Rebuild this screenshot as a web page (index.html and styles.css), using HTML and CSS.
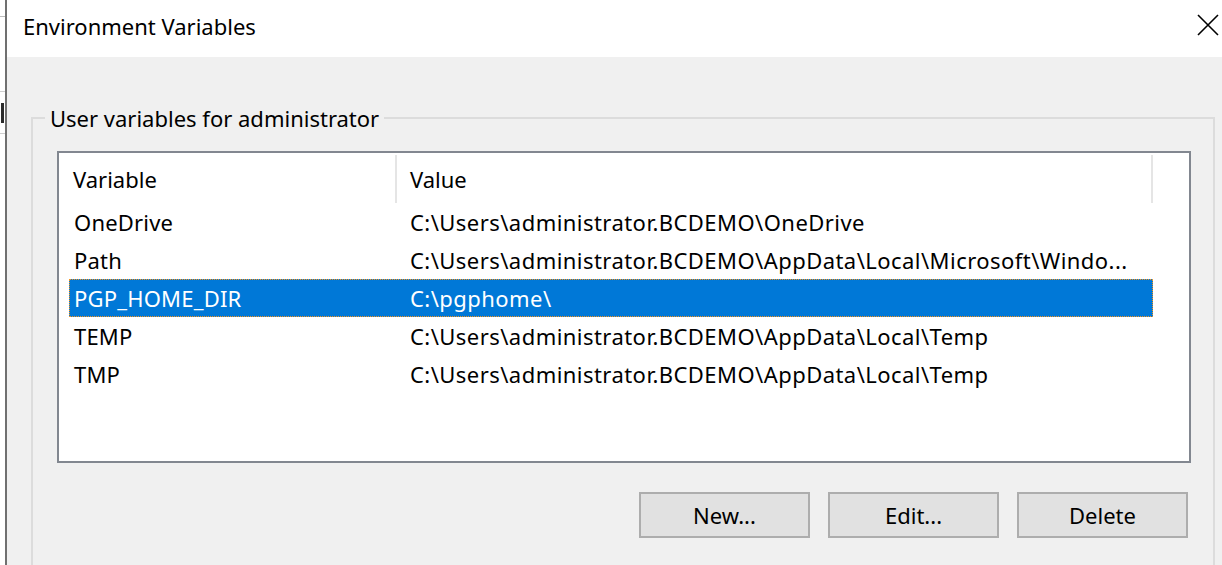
FILE: index.html
```html
<!DOCTYPE html>
<html lang="en">
<head>
<meta charset="utf-8">
<title>Environment Variables</title>
<link rel="stylesheet" href="styles.css">
</head>
<body>
<div class="screen">
  <div class="behind">
    <div class="behind-row r1"></div>
    <div class="behind-row r2"></div>
    <div class="behind-row r3"><span class="glyph-stub"></span></div>
  </div>
  <div class="dialog">
    <div class="titlebar">
      <div class="title">Environment Variables</div>
      <svg class="close" width="22" height="22" viewBox="0 0 22 22" aria-hidden="true">
        <path d="M1 1 L21 21 M21 1 L1 21" stroke="#000" stroke-width="1.6" fill="none"/>
      </svg>
    </div>
    <div class="client">
      <fieldset class="group">
        <legend>User variables for administrator</legend>
        <div class="listview">
          <div class="lv-header">
            <div class="hcell c1">Variable</div>
            <div class="hsep"></div>
            <div class="hcell c2">Value</div>
            <div class="hsep"></div>
          </div>
          <div class="lv-row"><div class="cell c1">OneDrive</div><div class="cell c2">C:\Users\administrator.BCDEMO\OneDrive</div></div>
          <div class="lv-row"><div class="cell c1">Path</div><div class="cell c2">C:\Users\administrator.BCDEMO\AppData\Local\Microsoft\Windo...</div></div>
          <div class="lv-row selected"><div class="cell c1">PGP_HOME_DIR</div><div class="cell c2">C:\pgphome\</div></div>
          <div class="lv-row"><div class="cell c1">TEMP</div><div class="cell c2">C:\Users\administrator.BCDEMO\AppData\Local\Temp</div></div>
          <div class="lv-row"><div class="cell c1">TMP</div><div class="cell c2">C:\Users\administrator.BCDEMO\AppData\Local\Temp</div></div>
        </div>
        <div class="buttons">
          <button class="btn">New...</button>
          <button class="btn">Edit...</button>
          <button class="btn">Delete</button>
        </div>
      </fieldset>
    </div>
  </div>
</div>
</body>
</html>
```
FILE: styles.css
```css
html, body {
  margin: 0;
  padding: 0;
}
body {
  width: 1222px;
  height: 565px;
  overflow: hidden;
  background: #fff;
  color: #000;
  font-family: "Noto Sans", "Open Sans", "DejaVu Sans", sans-serif;
  font-size: 22px;
}
.screen {
  display: flex;
  height: 565px;
}
.behind {
  width: 5px;
  flex: none;
  background: #fff;
  overflow: hidden;
}
.r1 {
  height: 16px;
  border-bottom: 1px solid #bdbdbd;
}
.r2 {
  height: 74px;
  border-bottom: 1px solid #cfcfcf;
}
.r3 {
  height: 41px;
  border-bottom: 1px solid #cfcfcf;
  display: flex;
  justify-content: flex-end;
  align-items: center;
}
.glyph-stub {
  display: block;
  width: 3px;
  height: 20px;
  margin-right: 1px;
  background: #2b2b2b;
}
.dialog {
  flex: 1;
  min-width: 0;
  border-left: 2px solid #707070;
  display: flex;
  flex-direction: column;
}
.titlebar {
  height: 57px;
  flex: none;
  box-sizing: border-box;
  background: #fff;
  display: flex;
  justify-content: space-between;
  align-items: flex-start;
  padding: 10px 3px 0 16px;
}
.title {
  line-height: 32px;
}
.close {
  display: block;
  margin-top: 4px;
}
.client {
  flex: 1;
  background: #f0f0f0;
  overflow: hidden;
  padding-top: 45px;
}
.group {
  margin: 0 7px 0 24px;
  border: 2px solid #dcdcdc;
  padding: 0;
  min-width: 0;
  height: 600px;
}
.group legend {
  margin-left: 12px;
  padding: 0 5px;
  line-height: 32px;
}
.listview {
  margin: 17px 22px 0 24px;
  height: 312px;
  box-sizing: border-box;
  border: 2px solid #828790;
  background: #fff;
}
.lv-header {
  display: flex;
  height: 50px;
}
.hcell {
  display: flex;
  align-items: center;
  box-sizing: border-box;
  padding-top: 1px;
}
.hcell.c1 {
  width: 336px;
  padding-left: 14px;
}
.hcell.c2 {
  width: 754px;
  padding-left: 13px;
}
.hsep {
  width: 2px;
  margin-top: 2px;
  background: #e5e5e5;
}
.lv-row {
  display: flex;
  align-items: center;
  height: 38px;
  width: 1084px;
  margin-left: 10px;
  box-sizing: border-box;
}
.cell {
  box-sizing: border-box;
  white-space: nowrap;
  overflow: hidden;
}
.cell.c1 {
  width: 326px;
  padding-left: 5px;
  letter-spacing: 0.2px;
}
.cell.c2 {
  width: 758px;
  padding-left: 15px;
  letter-spacing: 0.45px;
}
.lv-row.selected {
  background: #0078d7;
  color: #fff;
  outline: 1px dotted #f7941d;
  outline-offset: -1px;
}
.buttons {
  display: flex;
  justify-content: flex-end;
  gap: 18px;
  margin: 29px 25px 0 0;
}
.btn {
  width: 171px;
  height: 46px;
  box-sizing: border-box;
  border: 2px solid #adadad;
  border-radius: 0;
  background: #e1e1e1;
  color: #000;
  font: inherit;
  padding: 0;
}
```
